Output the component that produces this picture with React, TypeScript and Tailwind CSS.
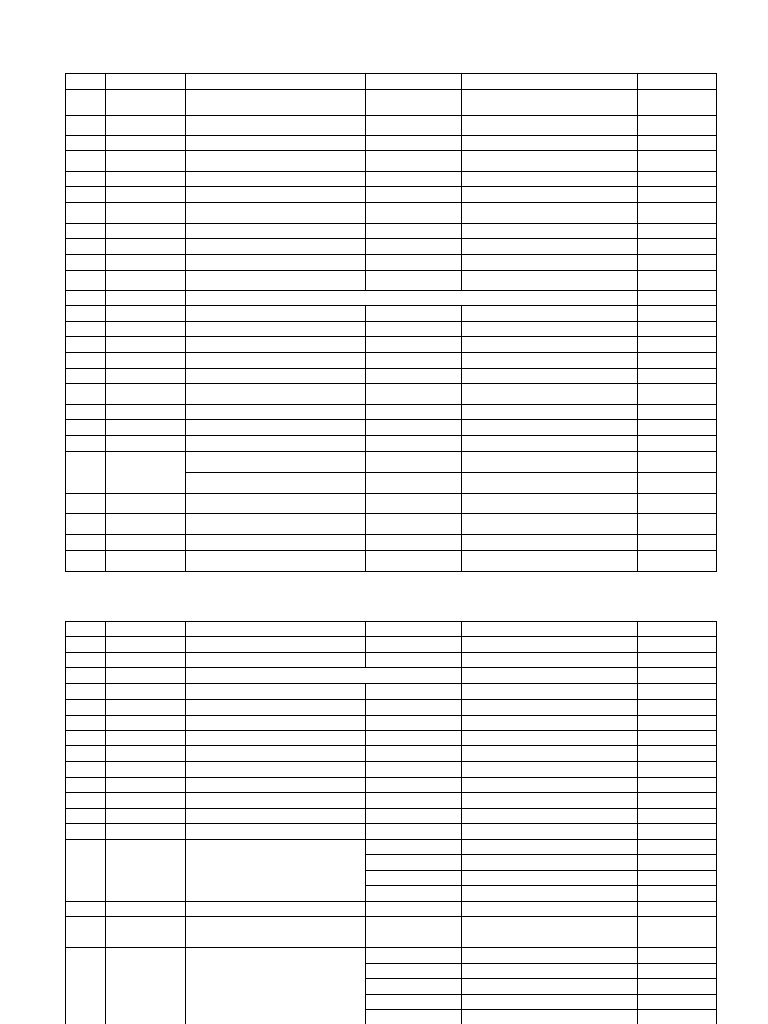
import React from 'react';

type Cell = { span?: string };

const six = (): Cell[] => [{}, {}, {}, {}, {}, {}];
const lastThree = (): Cell[] => [{}, {}, {}];

// first sheet: 28 rows, one merged strip and one two-row block
const firstRows: Cell[][] = [
    ...Array.from({ length: 12 }, six),
    [{}, {}, { span: 'col-span-3' }, {}],
    ...Array.from({ length: 9 }, six),
    [{ span: 'row-span-2' }, { span: 'row-span-2' }, {}, {}, {}, {}],
    [{}, {}, {}, {}],
    ...Array.from({ length: 4 }, six),
];

// second sheet runs off the bottom of the page
const secondRows: Cell[][] = [
    ...Array.from({ length: 3 }, six),
    [{}, {}, { span: 'col-span-2' }, {}, {}],
    ...Array.from({ length: 10 }, six),
    [{ span: 'row-span-4' }, { span: 'row-span-4' }, { span: 'row-span-4' }, {}, {}, {}],
    ...Array.from({ length: 3 }, lastThree),
    six(),
    six(),
    [{ span: 'row-span-7' }, { span: 'row-span-7' }, { span: 'row-span-7' }, {}, {}, {}],
    ...Array.from({ length: 6 }, lastThree),
];

const Sheet = ({ rows, rowClass }: { rows: Cell[][]; rowClass: string }) => (
    <div
        className={`grid w-[652px] grid-cols-[39px_79px_179px_95px_175px_78px] gap-px bg-black p-px ${rowClass}`}
    >
        {rows.flatMap((row, r) =>
            row.map((cell, c) => (
                <div key={`${r}-${c}`} className={`bg-white ${cell.span ?? ''}`} />
            ))
        )}
    </div>
);

export default function App() {
    return (
        <div className="min-h-screen bg-white pt-[73px] pl-[65px] font-['Liberation_Sans',sans-serif]">
            <Sheet
                rows={firstRows}
                rowClass="grid-rows-[15px_25px_19px_14px_20px_14px_15px_20px_14px_15px_15px_19px_14px_15px_14px_15px_15px_14px_20px_14px_15px_15px_20px_20px_19px_20px_15px_20px]"
            />
            <div className="mt-[49px]">
                <Sheet
                    rows={secondRows}
                    rowClass="grid-rows-[14px_15px_14px_15px_15px_15px_14px_14px_15px_15px_14px_15px_14px_15px_14px_15px_14px_15px_14px_30px_15px_14px_15px_14px_15px_14px_15px]"
                />
            </div>
        </div>
    );
}
